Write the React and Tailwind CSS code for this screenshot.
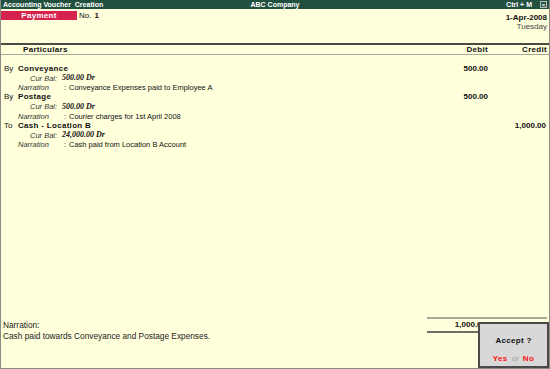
import React from 'react';

const entries = [
    { dir: 'By', ledger: 'Conveyance', bal: '500.00 Dr', narration: 'Conveyance Expenses paid to Employee A', debit: '500.00', credit: '' },
    { dir: 'By', ledger: 'Postage', bal: '500.00 Dr', narration: 'Courier charges for 1st April 2008', debit: '500.00', credit: '' },
    { dir: 'To', ledger: 'Cash - Location B', bal: '24,000.00 Dr', narration: 'Cash paid from Location B Account', debit: '', credit: '1,000.00' },
];

const Entry = ({ entry }) => (
    <div>
        <div className="flex h-[9.5px] items-center">
            <span className="w-[17px] pl-[3px]">{entry.dir}</span>
            <span className="flex-1 font-bold tracking-[0.3px]">{entry.ledger}</span>
            <span className="w-[60px] text-right font-bold">{entry.debit}</span>
            <span className="w-[61px] pr-[3px] text-right font-bold">{entry.credit}</span>
        </div>
        <div className="flex h-[9.5px] items-center pl-[29px] italic">
            <span className="w-[32px] text-[7.5px] text-[#333]">Cur Bal:</span>
            <span className="font-bold text-[8px]" style={{ fontFamily: '"Liberation Serif", serif' }}>{entry.bal}</span>
        </div>
        <div className="flex h-[9.5px] items-center pl-[17px] text-[7.5px]">
            <span className="w-[46px] italic text-[#333]">Narration</span>
            <span className="w-[5px]">:</span>
            <span>{entry.narration}</span>
        </div>
    </div>
);

const App = () => {
    return (
        <div
            className="relative flex h-[369px] w-[550px] flex-col overflow-hidden border-x border-b border-[#8c8c84] bg-[#ffffdc] text-[8px] leading-none text-[#111]"
            style={{ fontFamily: '"Liberation Sans", Arial, sans-serif' }}
        >
            {/* title bar */}
            <div className="grid h-[9px] grid-cols-3 items-center bg-[#22503f] px-[2px] text-[7px] font-bold text-white">
                <span>Accounting Voucher&nbsp; Creation</span>
                <span className="text-center">ABC Company</span>
                <div className="flex items-center justify-end gap-[8px]">
                    <span>Ctrl + M</span>
                    <span className="flex h-[7px] w-[7px] items-center justify-center border border-[#bbb] text-[6px] leading-none">×</span>
                </div>
            </div>

            {/* voucher header */}
            <div className="flex h-[34px] pt-[2px]">
                <div className="flex h-[9px] w-[76px] items-center justify-center bg-[#d6224f] font-bold tracking-[0.3px] text-white">
                    Payment
                </div>
                <div className="ml-[2px] flex h-[9px] items-center gap-[3px]">
                    <span>No.</span>
                    <span className="font-bold">1</span>
                </div>
                <div className="ml-auto flex flex-col items-end pr-[2px] pt-[3px]">
                    <span className="font-bold">1-Apr-2008</span>
                    <span className="mt-[1px] text-[#444]">Tuesday</span>
                </div>
            </div>

            {/* column header */}
            <div className="flex h-[12px] items-center border-t-2 border-b border-t-[#4a4a44] border-b-[#a8a898] font-bold">
                <span className="flex-1 pl-[22px] tracking-[0.3px]">Particulars</span>
                <span className="w-[60px] text-right tracking-[0.3px]">Debit</span>
                <span className="w-[61px] pr-[2px] text-right tracking-[0.3px]">Credit</span>
            </div>

            {/* entries */}
            <div className="pt-[9px]">
                {entries.map((entry, index) => (
                    <Entry key={index} entry={entry} />
                ))}
            </div>

            <div className="flex-1" />

            {/* totals + narration */}
            <div className="h-[51px]">
                <div className="flex items-start">
                    <div className="flex-1 pl-[2px] pt-[4px] text-[8.3px] text-[#222]">
                        <div>Narration:</div>
                        <div className="mt-[3px]">Cash paid towards Conveyance and Postage Expenses.</div>
                    </div>
                    <div className="mr-[2px] flex w-[120px] border-t-2 border-b-2 border-t-[#a8a898] border-b-[#6e6e66] py-[2px] font-bold">
                        <span className="w-[59px] text-right">1,000.00</span>
                        <span className="flex-1 text-right">1,000.00</span>
                    </div>
                </div>
            </div>

            {/* accept dialog */}
            <div className="absolute right-0 bottom-0 flex h-[46px] w-[71px] flex-col items-center border-2 border-[#4a4a4a] bg-[#d8d8d8]">
                <span className="mt-[13px] font-bold tracking-[0.3px]">Accept ?</span>
                <div className="mt-auto mb-[3px] flex items-center gap-[4px]">
                    <span className="font-bold text-[#ff1010] tracking-[0.4px]">Yes</span>
                    <span className="text-[#999]">or</span>
                    <span className="font-bold text-[#ff1010] tracking-[0.4px]">No</span>
                </div>
            </div>
        </div>
    );
};

export default App;
